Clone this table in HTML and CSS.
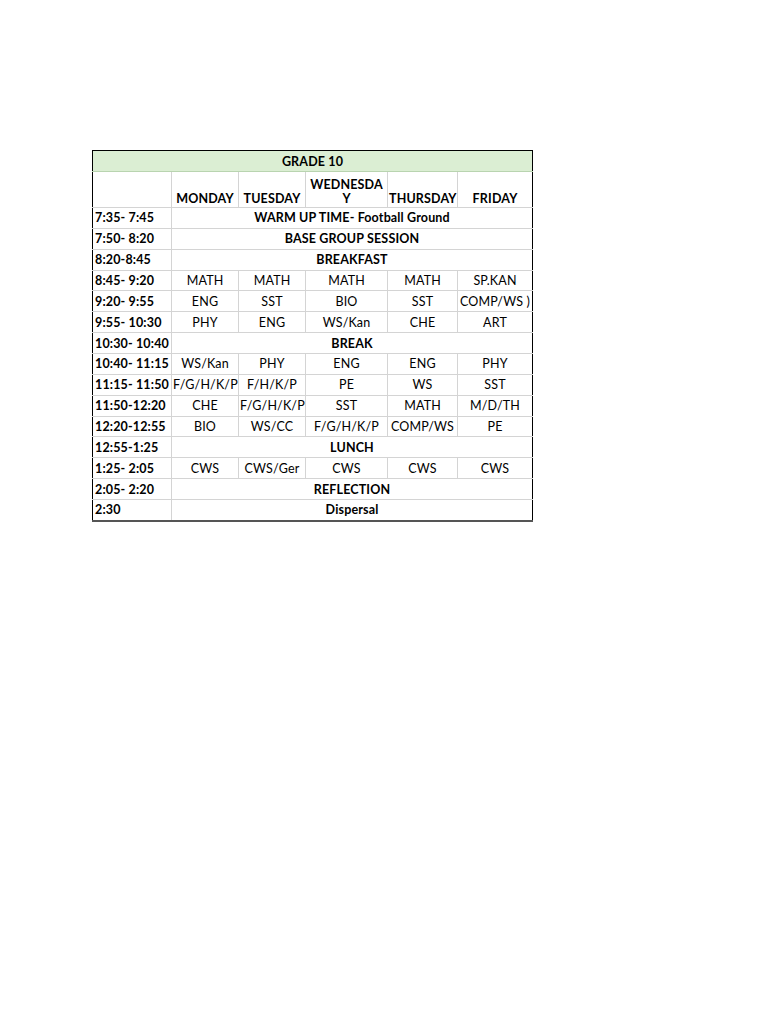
FILE: index.html
```html
<!DOCTYPE html>
<html>
<head>
<meta charset="utf-8">
<link rel="stylesheet" href="styles.css">
</head>
<body>
<div class="page">
<table class="tt">
<colgroup>
<col class="c-time"><col class="c-mon"><col class="c-tue"><col class="c-wed"><col class="c-thu"><col class="c-fri">
</colgroup>
<tr class="r-title"><td colspan="6" class="title">GRADE 10</td></tr>
<tr class="r-days">
<td></td><td class="day">MONDAY</td><td class="day">TUESDAY</td><td class="day">WEDNESDA<br>Y</td><td class="day">THURSDAY</td><td class="day">FRIDAY</td>
</tr>
<tr><td class="time">7:35- 7:45</td><td colspan="5" class="span">WARM UP TIME- Football Ground</td></tr>
<tr><td class="time">7:50- 8:20</td><td colspan="5" class="span">BASE GROUP SESSION</td></tr>
<tr><td class="time">8:20-8:45</td><td colspan="5" class="span">BREAKFAST</td></tr>
<tr><td class="time">8:45- 9:20</td><td>MATH</td><td>MATH</td><td>MATH</td><td>MATH</td><td>SP.KAN</td></tr>
<tr><td class="time">9:20- 9:55</td><td>ENG</td><td>SST</td><td>BIO</td><td>SST</td><td>COMP/WS )</td></tr>
<tr><td class="time">9:55- 10:30</td><td>PHY</td><td>ENG</td><td>WS/Kan</td><td>CHE</td><td>ART</td></tr>
<tr><td class="time">10:30- 10:40</td><td colspan="5" class="span">BREAK</td></tr>
<tr><td class="time">10:40- 11:15</td><td>WS/Kan</td><td>PHY</td><td>ENG</td><td>ENG</td><td>PHY</td></tr>
<tr><td class="time">11:15- 11:50</td><td>F/G/H/K/P</td><td>F/H/K/P</td><td>PE</td><td>WS</td><td>SST</td></tr>
<tr><td class="time">11:50-12:20</td><td>CHE</td><td>F/G/H/K/P</td><td>SST</td><td>MATH</td><td>M/D/TH</td></tr>
<tr><td class="time">12:20-12:55</td><td>BIO</td><td>WS/CC</td><td>F/G/H/K/P</td><td>COMP/WS</td><td>PE</td></tr>
<tr><td class="time">12:55-1:25</td><td colspan="5" class="span">LUNCH</td></tr>
<tr><td class="time">1:25- 2:05</td><td>CWS</td><td>CWS/Ger</td><td>CWS</td><td>CWS</td><td>CWS</td></tr>
<tr><td class="time">2:05- 2:20</td><td colspan="5" class="span">REFLECTION</td></tr>
<tr><td class="time">2:30</td><td colspan="5" class="span">Dispersal</td></tr>
</table>
</div>
</body>
</html>
```
FILE: styles.css
```css
html, body {
  margin: 0;
  padding: 0;
  background: #ffffff;
}
.page {
  padding: 150px 0 0 92px;
}
.tt {
  border-collapse: collapse;
  table-layout: fixed;
  width: 441px;
  font-family: Lato, "Open Sans", sans-serif;
  font-size: 12.5px;
  letter-spacing: 0.15px;
  color: #000;
  border: 1px solid #000;
  border-bottom: 2px solid #444;
}
.c-time { width: 79px; }
.c-mon { width: 67px; }
.c-tue { width: 67px; }
.c-wed { width: 82px; }
.c-thu { width: 70px; }
.c-fri { width: 75px; }
.tt td {
  border: 1px solid #d4d4d4;
  height: 18.87px;
  padding: 1px 1px 0;
  text-align: center;
  vertical-align: middle;
  white-space: nowrap;
  overflow: hidden;
  line-height: 14px;
}
.tt tr:first-child td { border-top: 1px solid #000; }
.tt td:first-child { border-left: 1px solid #000; }
.tt td:last-child { border-right: 1px solid #000; }
.tt tr:last-child td { border-bottom: 2px solid #555; }
.r-title td.title {
  background: #dbeed3;
  font-weight: bold;
  height: 19px;
  border-bottom: 1px solid #b9d4b0;
}
.r-days td {
  height: 33px;
  vertical-align: bottom;
  padding-bottom: 1px;
}
.r-days td.day {
  font-weight: bold;
  white-space: normal;
}
.tt td.time {
  text-align: left;
  font-weight: bold;
  padding-left: 2px;
}
.tt td.span {
  font-weight: bold;
}
```
